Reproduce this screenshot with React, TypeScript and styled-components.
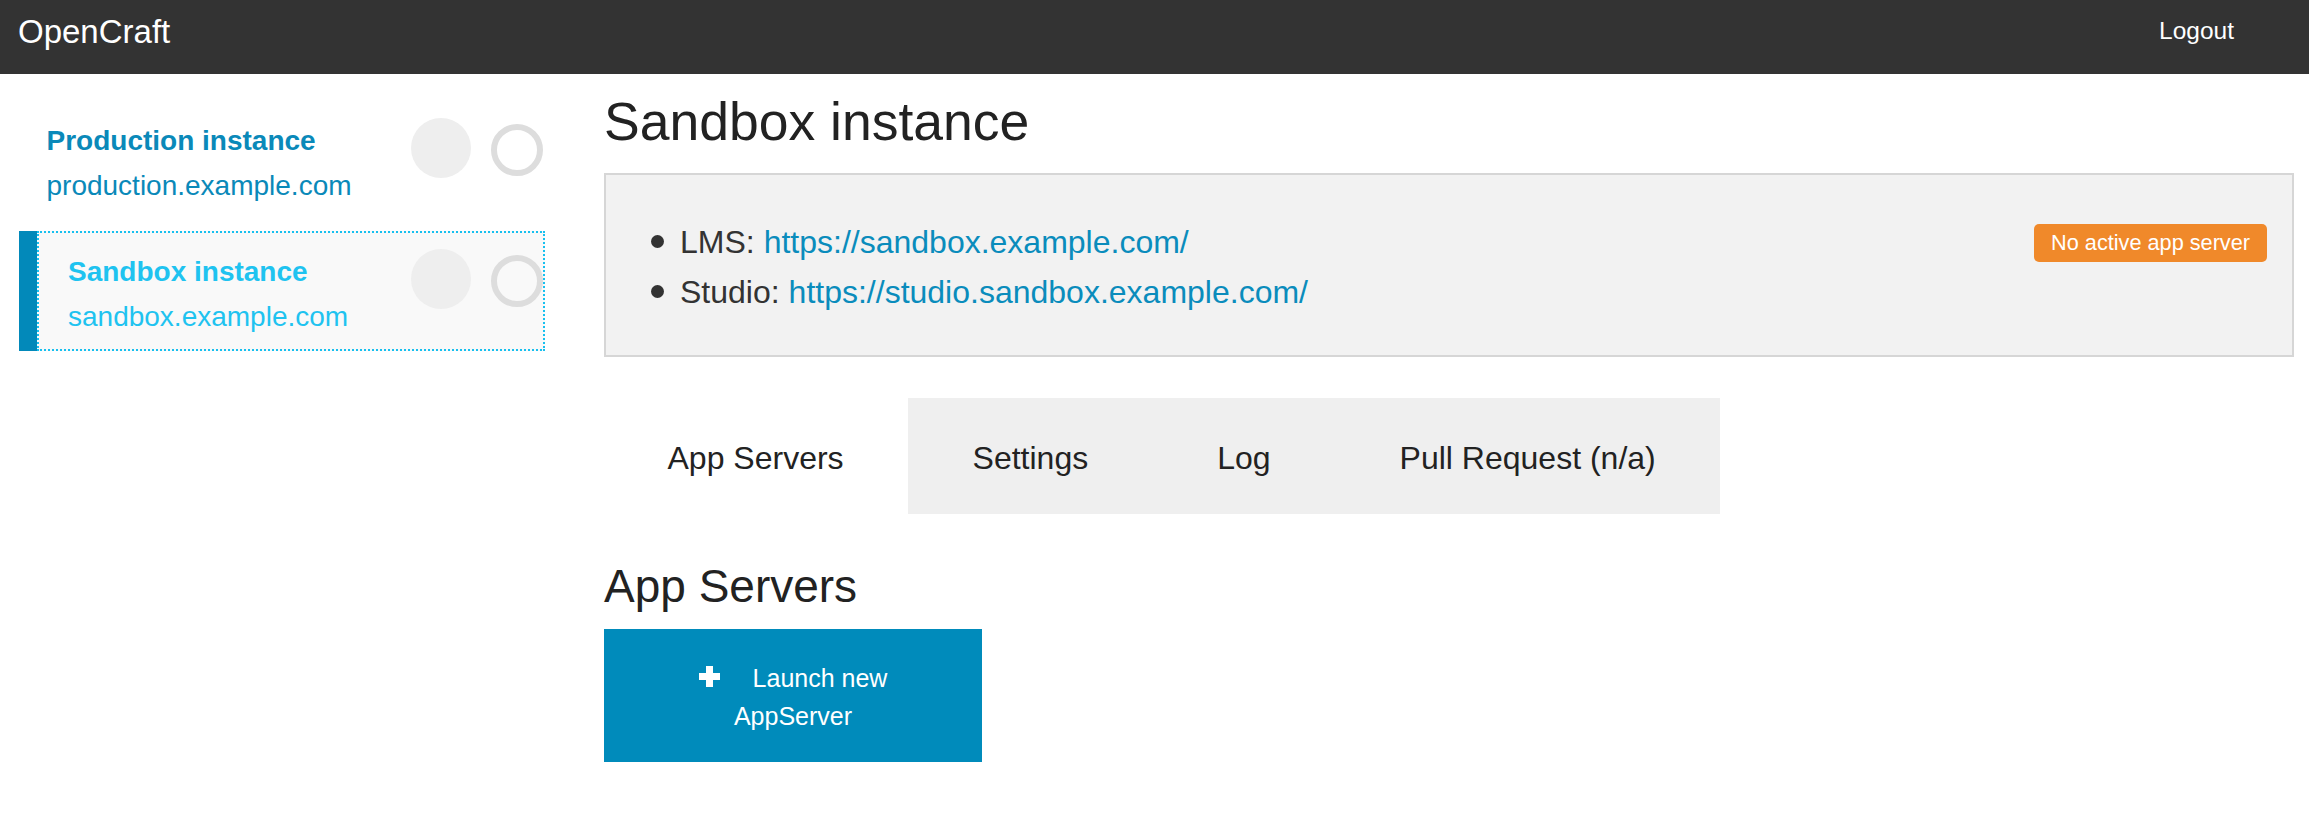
import React from "react";
import styled, { createGlobalStyle } from "styled-components";

const GlobalStyle = createGlobalStyle`
  html, body {
    margin: 0;
    padding: 0;
    background: #fff;
  }
  body {
    font-family: "Liberation Sans", Arial, Helvetica, sans-serif;
    color: #333;
  }
  * {
    box-sizing: border-box;
  }
`;

const Navbar = styled.header`
  height: 74px;
  background: #333333;
  display: flex;
  align-items: flex-start;
  justify-content: space-between;
  padding: 0 75px 0 18px;
`;

const Brand = styled.a`
  margin-top: 15px;
  font-size: 33px;
  line-height: 33px;
  color: #ffffff;
  text-decoration: none;
`;

const NavLink = styled.a`
  margin-top: 19px;
  font-size: 24.5px;
  line-height: 24.5px;
  color: #ffffff;
  text-decoration: none;
`;

const Page = styled.div`
  display: flex;
  gap: 59px;
  padding: 0 15px 0 19px;
`;

const Sidebar = styled.ul`
  width: 526px;
  flex: none;
  list-style: none;
  margin: 0;
  padding: 26px 0 0;
`;

const InstanceItem = styled.li<{ $active?: boolean }>`
  display: flex;
  height: 120px;
  margin-bottom: 11px;
  border-left: ${(p) => (p.$active ? "18px solid #0289ba" : "none")};
`;

const InstanceLink = styled.a<{ $active?: boolean }>`
  flex: 1;
  display: flex;
  justify-content: space-between;
  padding: 16px 0 0 ${(p) => (p.$active ? "29px" : "25.5px")};
  border: 2px dotted ${(p) => (p.$active ? "#18c0ef" : "transparent")};
  background: ${(p) => (p.$active ? "#f9f9f9" : "transparent")};
  color: ${(p) => (p.$active ? "#1fc3f0" : "#0a89b9")};
  text-decoration: none;
`;

const InstanceText = styled.div`
  display: flex;
  flex-direction: column;
`;

const InstanceName = styled.span`
  font-size: 28px;
  font-weight: bold;
  line-height: 45px;
`;

const InstanceDomain = styled.span`
  font-size: 28px;
  line-height: 45px;
`;

const Indicators = styled.div`
  display: flex;
  align-items: flex-start;
  gap: 20px;
`;

const Dot = styled.span`
  width: 60px;
  height: 60px;
  border-radius: 50%;
  background: #eeeeee;
`;

const Ring = styled.span`
  width: 52px;
  height: 52px;
  margin-top: 6px;
  border-radius: 50%;
  border: 6px solid #dddddd;
  background: transparent;
`;

const Main = styled.main`
  flex: 1;
  min-width: 0;
`;

const Title = styled.h1`
  margin: 19px 0 21px;
  font-size: 53.5px;
  line-height: 1.1;
  font-weight: 400;
  color: #222;
`;

const InfoBox = styled.div`
  border: 2px solid #d6d6d6;
  background: #f2f2f2;
  padding: 42px 25px 38px 45px;
`;

const InfoList = styled.ul`
  list-style: none;
  margin: 0;
  padding: 0;
`;

const InfoItem = styled.li`
  display: flex;
  align-items: center;
  height: 50px;
  font-size: 32px;
  line-height: 50px;
  color: #333;
`;

const Bullet = styled.span`
  width: 13px;
  height: 13px;
  border-radius: 50%;
  background: #333;
  margin-right: 16px;
  flex: none;
`;

const Link = styled.a`
  color: #0a8cbc;
  text-decoration: none;
  margin-left: 0.28em;
`;

const StatusLabel = styled.span`
  margin-left: auto;
  margin-top: 2px;
  height: 38px;
  padding: 0 17px;
  border-radius: 5px;
  background: #f0892a;
  color: #fff;
  font-size: 21.7px;
  line-height: 38px;
`;

const Tabs = styled.nav`
  display: inline-flex;
  margin-top: 41px;
  margin-left: -1px;
  background: #efefef;
`;

const Tab = styled.a<{ $active?: boolean }>`
  height: 116px;
  padding: 4px 64.5px 0;
  font-size: 32px;
  line-height: 112px;
  color: #222;
  background: ${(p) => (p.$active ? "#ffffff" : "#efefef")};
  text-decoration: none;
`;

const SectionTitle = styled.h2`
  margin: 47px 0 18px;
  font-size: 46px;
  line-height: 1.1;
  font-weight: 400;
  color: #222;
`;

const LaunchButton = styled.button`
  display: block;
  width: 378px;
  padding: 30px 0 27px;
  border: none;
  border-radius: 0;
  background: #008bbb;
  color: #fff;
  font-family: inherit;
  font-size: 25px;
  line-height: 38px;
  text-align: center;
  cursor: pointer;
`;

const PlusIcon = styled.svg`
  width: 21px;
  height: 21px;
  margin-right: 33px;
  vertical-align: baseline;
`;

const instances = [
  { name: "Production instance", domain: "production.example.com", active: false },
  { name: "Sandbox instance", domain: "sandbox.example.com", active: true },
];

const tabs = ["App Servers", "Settings", "Log", "Pull Request (n/a)"];

export default function App() {
  return (
    <>
      <GlobalStyle />
      <Navbar>
        <Brand href="#">OpenCraft</Brand>
        <NavLink href="#">Logout</NavLink>
      </Navbar>
      <Page>
        <Sidebar>
          {instances.map((inst) => (
            <InstanceItem key={inst.name} $active={inst.active}>
              <InstanceLink href="#" $active={inst.active}>
                <InstanceText>
                  <InstanceName>{inst.name}</InstanceName>
                  <InstanceDomain>{inst.domain}</InstanceDomain>
                </InstanceText>
                <Indicators>
                  <Dot />
                  <Ring />
                </Indicators>
              </InstanceLink>
            </InstanceItem>
          ))}
        </Sidebar>
        <Main>
          <Title>Sandbox instance</Title>
          <InfoBox>
            <InfoList>
              <InfoItem>
                <Bullet />
                <span>
                  LMS:<Link href="#">https://sandbox.example.com/</Link>
                </span>
                <StatusLabel>No active app server</StatusLabel>
              </InfoItem>
              <InfoItem>
                <Bullet />
                <span>
                  Studio:<Link href="#">https://studio.sandbox.example.com/</Link>
                </span>
              </InfoItem>
            </InfoList>
          </InfoBox>
          <Tabs>
            {tabs.map((t, i) => (
              <Tab key={t} href="#" $active={i === 0}>
                {t}
              </Tab>
            ))}
          </Tabs>
          <SectionTitle>App Servers</SectionTitle>
          <LaunchButton>
            <PlusIcon viewBox="0 0 21 21">
              <rect x="7" y="0" width="7" height="21" fill="#fff" />
              <rect x="0" y="7" width="21" height="7" fill="#fff" />
            </PlusIcon>
            Launch new
            <br />
            AppServer
          </LaunchButton>
        </Main>
      </Page>
    </>
  );
}
